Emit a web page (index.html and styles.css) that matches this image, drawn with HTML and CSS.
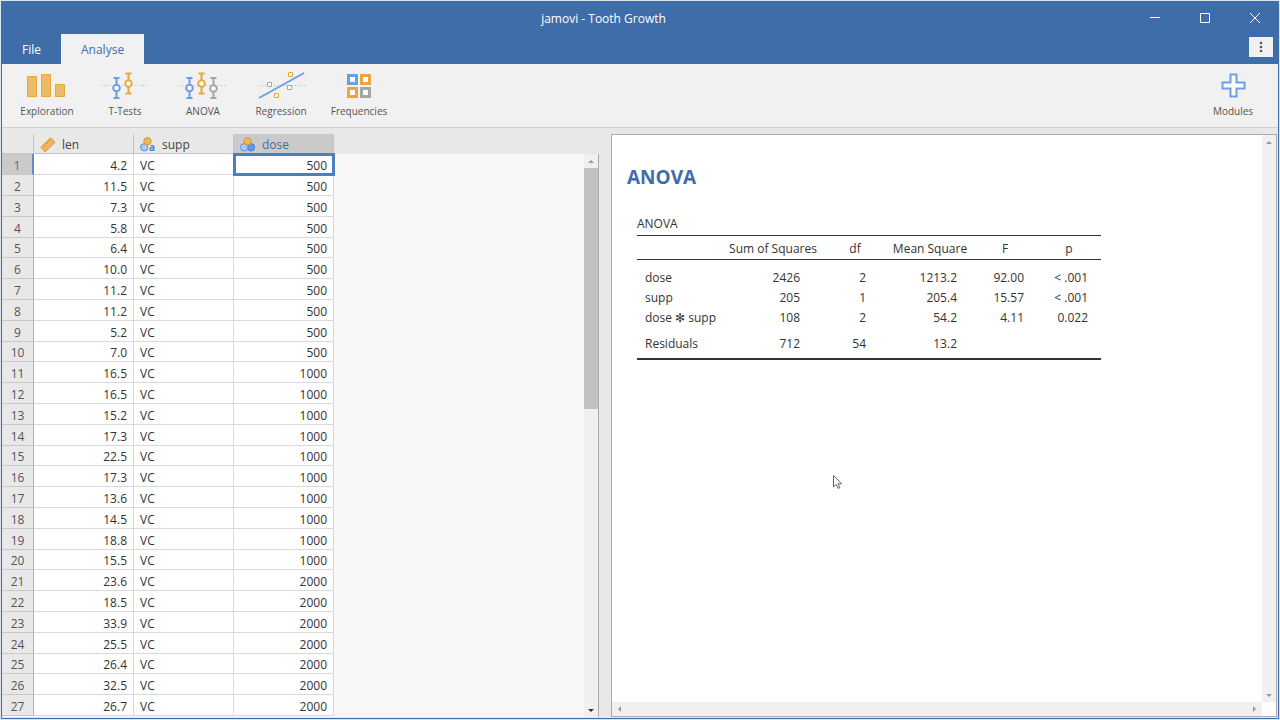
FILE: index.html
```html
<!DOCTYPE html>
<html lang="en">
<head>
    <meta charset="UTF-8">
    <meta name="viewport" content="width=device-width, initial-scale=1.0">
    <title>jamovi - Tooth Growth</title>
    <link rel="stylesheet" href="styles.css">
</head>
<body>
    <div class="window">
        <header class="title-bar">
            <h1 class="title">jamovi - Tooth Growth</h1>
            <button class="window-button" aria-label="Minimise">
                <svg width="12" height="12" viewBox="0 0 12 12"><path d="M1 5.5h10"/></svg>
            </button>
            <button class="window-button" aria-label="Maximise">
                <svg width="12" height="12" viewBox="0 0 12 12"><path d="M1.5 1.5h9v9h-9z"/></svg>
            </button>
            <button class="window-button" aria-label="Close">
                <svg width="12" height="12" viewBox="0 0 12 12"><path d="M1 1l10 10M11 1L1 11"/></svg>
            </button>
        </header>

        <nav class="tabs">
            <button class="tab">File</button>
            <button class="tab active">Analyse</button>
            <button class="menu-button" aria-label="Menu">
                <svg width="4" height="12" viewBox="0 0 4 12"><circle cx="2" cy="2" r="1.3"/><circle cx="2" cy="6" r="1.3"/><circle cx="2" cy="10" r="1.3"/></svg>
            </button>
        </nav>

        <div class="ribbon">
            <button class="ribbon-item">
                <svg width="48" height="30" viewBox="0 0 48 30">
                    <g fill="#ebbc65" stroke="#e6a93a">
                        <path d="M4.5 6.5h9v20h-9zM18.5 4.5h9v22h-9zM32.5 14.5h9v12h-9z"/>
                    </g>
                </svg>
                <span>Exploration</span>
            </button>
            <button class="ribbon-item">
                <svg width="48" height="30" viewBox="0 0 48 30">
                    <path class="dots" d="M0 15.5h46"/>
                    <g class="blue"><path d="M15.5 8v20M12.5 8h6M12.5 28h6"/><circle cx="15.5" cy="18" r="3.3"/></g>
                    <g class="gold"><path d="M27.5 3.5v20M24.5 3.5h6M24.5 23.5h6"/><circle cx="27.5" cy="13.5" r="3.3"/></g>
                </svg>
                <span>T-Tests</span>
            </button>
            <button class="ribbon-item">
                <svg width="48" height="30" viewBox="0 0 48 30">
                    <path class="dots" d="M0 15.5h46"/>
                    <g class="blue"><path d="M10.5 8v20M7.5 8h6M7.5 28h6"/><circle cx="10.5" cy="18" r="3.3"/></g>
                    <g class="gold"><path d="M22.5 3.5v20M19.5 3.5h6M19.5 23.5h6"/><circle cx="22.5" cy="13.5" r="3.3"/></g>
                    <g class="grey"><path d="M34.5 8v20M31.5 8h6M31.5 28h6"/><circle cx="34.5" cy="18.5" r="3.3"/></g>
                </svg>
                <span>ANOVA</span>
            </button>
            <button class="ribbon-item">
                <svg width="48" height="30" viewBox="0 0 48 30">
                    <path class="dots" d="M2 15.5h46"/>
                    <path class="blue" d="M2 28L47 3"/>
                    <g class="gold thin"><path d="M31.5 2.5h4v4h-4zM17.5 23.5h4v4h-4z"/></g>
                    <g class="grey thin"><path d="M10.5 12.5h4v4h-4zM30.5 15.5h4v4h-4z"/></g>
                </svg>
                <span>Regression</span>
            </button>
            <button class="ribbon-item">
                <svg width="48" height="30" viewBox="0 0 48 30">
                    <g class="thick">
                        <path class="blue" d="M13.5 5.5h8v8h-8z"/>
                        <path class="gold" d="M26.5 5.5h8v8h-8zM13.5 18.5h8v8h-8z"/>
                        <path class="grey" d="M26.5 18.5h8v8h-8z"/>
                    </g>
                </svg>
                <span>Frequencies</span>
            </button>
            <button class="ribbon-item modules">
                <svg width="48" height="30" viewBox="0 0 48 30">
                    <path class="blue" d="M21.5 4.5h6v8h8v6h-8v8h-6v-8h-8v-6h8z"/>
                </svg>
                <span>Modules</span>
            </button>
        </div>

        <main class="content">
            <section class="data">
                <table class="sheet">
                    <colgroup>
                        <col class="col-number">
                        <col class="col-data">
                        <col class="col-data">
                        <col class="col-data">
                    </colgroup>
                    <thead>
                        <tr>
                            <th></th>
                            <th>
                                <div class="variable">
                                    <svg width="16" height="16" viewBox="0 0 16 16">
                                        <path fill="#f1b55a" stroke="#d99a3a" d="M.8 10.3L10.6 .8l4.4 4.4-9.8 9.8z"/>
                                        <path stroke="#c98a2c" d="M3.5 8l1.6 1.6M6 5.5l1.6 1.6M8.5 3l1.6 1.6"/>
                                    </svg>
                                    len
                                </div>
                            </th>
                            <th>
                                <div class="variable">
                                    <svg width="16" height="16" viewBox="0 0 16 16">
                                        <circle cx="4.2" cy="10.3" r="3.7" fill="#a9caf3" stroke="#5b8ed6"/>
                                        <circle cx="7.5" cy="4.2" r="3.7" fill="#f1b55a" stroke="#d99a3a"/>
                                        <text x="9" y="14" class="letter">a</text>
                                    </svg>
                                    supp
                                </div>
                            </th>
                            <th class="selected">
                                <div class="variable">
                                    <svg width="16" height="16" viewBox="0 0 16 16">
                                        <circle cx="11" cy="10.3" r="3.7" fill="#5f98e8" stroke="#4a7fce"/>
                                        <circle cx="4.2" cy="10.3" r="3.7" fill="#a9caf3" stroke="#5b8ed6"/>
                                        <circle cx="7.5" cy="4.2" r="3.7" fill="#f1b55a" stroke="#d99a3a"/>
                                    </svg>
                                    dose
                                </div>
                            </th>
                        </tr>
                    </thead>
                    <tbody id="rows"></tbody>
                </table>
                <div class="scrollbar vertical">
                    <svg width="14" height="14" viewBox="0 0 14 14"><path fill="#999" d="M4 9l3-3 3 3z"/></svg>
                    <div class="track"><div class="thumb"></div></div>
                    <svg width="14" height="14" viewBox="0 0 14 14"><path fill="#333" d="M4 6l3 3 3-3z"/></svg>
                </div>
            </section>

            <section class="results">
                <div class="output">
                    <h2>ANOVA</h2>
                    <table class="anova">
                        <caption>ANOVA</caption>
                        <thead>
                            <tr>
                                <th class="term"></th>
                                <th class="ss">Sum of Squares</th>
                                <th class="df">df</th>
                                <th class="ms">Mean Square</th>
                                <th class="f">F</th>
                                <th class="p">p</th>
                            </tr>
                        </thead>
                        <tbody>
                            <tr>
                                <td class="term">dose</td>
                                <td class="ss">2426</td>
                                <td class="df">2</td>
                                <td class="ms">1213.2</td>
                                <td class="f">92.00</td>
                                <td class="p">&lt; .001</td>
                            </tr>
                            <tr>
                                <td class="term">supp</td>
                                <td class="ss">205</td>
                                <td class="df">1</td>
                                <td class="ms">205.4</td>
                                <td class="f">15.57</td>
                                <td class="p">&lt; .001</td>
                            </tr>
                            <tr>
                                <td class="term">dose ✻ supp</td>
                                <td class="ss">108</td>
                                <td class="df">2</td>
                                <td class="ms">54.2</td>
                                <td class="f">4.11</td>
                                <td class="p">0.022</td>
                            </tr>
                            <tr class="residuals">
                                <td class="term">Residuals</td>
                                <td class="ss">712</td>
                                <td class="df">54</td>
                                <td class="ms">13.2</td>
                                <td class="f"></td>
                                <td class="p"></td>
                            </tr>
                        </tbody>
                    </table>
                    <svg class="cursor" width="10" height="15" viewBox="0 0 10 15"><path d="M.5 .5v11.5l2.7-2.6 1.8 4 1.8-.8-1.8-3.8h3.6z"/></svg>
                </div>
                <div class="scrollbar vertical">
                    <svg width="14" height="14" viewBox="0 0 14 14"><path fill="#999" d="M4 9l3-3 3 3z"/></svg>
                    <div class="track"></div>
                    <svg width="14" height="14" viewBox="0 0 14 14"><path fill="#999" d="M4 6l3 3 3-3z"/></svg>
                </div>
                <div class="scrollbar horizontal">
                    <svg width="14" height="14" viewBox="0 0 14 14"><path fill="#999" d="M9 4L6 7l3 3z"/></svg>
                    <div class="track"></div>
                    <svg width="14" height="14" viewBox="0 0 14 14"><path fill="#999" d="M5 4l3 3-3 3z"/></svg>
                </div>
            </section>
        </main>
    </div>

    <script>
        // Tooth growth data: all rows here are VC, ten rows for each dose
        var len = ['4.2', '11.5', '7.3', '5.8', '6.4', '10.0', '11.2', '11.2', '5.2', '7.0',
                   '16.5', '16.5', '15.2', '17.3', '22.5', '17.3', '13.6', '14.5', '18.8', '15.5',
                   '23.6', '18.5', '33.9', '25.5', '26.4', '32.5', '26.7'];
        var doses = [500, 1000, 2000];

        var html = '';
        for (var i = 0; i < len.length; i++) {
            var selected = i == 0 ? ' class="selected"' : '';
            html += '<tr>' +
                '<th' + selected + '>' + (i + 1) + '</th>' +
                '<td class="number">' + len[i] + '</td>' +
                '<td>VC</td>' +
                '<td class="number' + (i == 0 ? ' active-cell' : '') + '">' + doses[Math.floor(i / 10)] + '</td>' +
                '</tr>';
        }
        document.getElementById('rows').innerHTML = html;
    </script>
</body>
</html>
```
FILE: styles.css
```css
* {
    margin: 0;
    padding: 0;
    box-sizing: border-box;
}

body {
    height: 100vh;
    padding: 1px;
    background-color: #dde6f0;
    font-family: "Open Sans", "Noto Sans", sans-serif;
    font-size: 12px;
    color: #333;
    overflow: hidden;
}

button {
    border: none;
    background: none;
    font-family: inherit;
    color: inherit;
}

svg {
    display: block;
    fill: none;
}

.window {
    height: 100%;
    display: flex;
    flex-direction: column;
    border: 1px solid #3e6da9;
    border-top: none;
    background-color: #e8e8e8;
}

/* title bar and tabs */

.title-bar {
    display: flex;
    gap: 4px;
    height: 33px;
    padding-left: 77px;
    background-color: #3e6da9;
    color: #fff;
}

.title {
    flex: 1;
    font-size: 12px;
    font-weight: normal;
    line-height: 35px;
    text-align: center;
}

.window-button {
    width: 46px;
    display: flex;
    align-items: center;
    justify-content: center;
}

.window-button svg {
    stroke: #fff;
}

.tabs {
    display: flex;
    height: 30px;
    background-color: #3e6da9;
}

.tab {
    padding: 0 20px;
    font-size: 12px;
    color: #fff;
}

.tab.active {
    background-color: #f1f1f1;
    color: #3e6da9;
}

.menu-button {
    width: 24px;
    height: 20px;
    margin: 3px 5px 0 auto;
    display: flex;
    align-items: center;
    justify-content: center;
    background-color: #f1f1f1;
}

.menu-button svg {
    fill: #555;
}

/* ribbon */

.ribbon {
    display: flex;
    height: 64px;
    padding: 6px 6px 0;
    border-bottom: 1px solid #d0d0d0;
    background-color: #f1f1f1;
}

.ribbon-item {
    width: 78px;
    display: flex;
    flex-direction: column;
    align-items: center;
    gap: 4px;
    font-size: 10px;
    line-height: 14px;
    color: #555;
}

.modules {
    margin-left: auto;
}

.blue, .gold, .grey {
    fill: #fff;
    stroke-width: 2;
}

.blue {
    stroke: #6a9fe8;
}

.gold {
    stroke: #e6a93a;
}

.grey {
    stroke: #a6a6a6;
}

.dots {
    stroke: #a9bcd6;
    stroke-dasharray: 1 2;
}

.thin {
    stroke-width: 1;
}

.thick path {
    stroke-width: 3;
}

/* data and results side by side */

.content {
    flex: 1;
    min-height: 0;
    display: grid;
    grid-template-columns: 597fr 666fr;
    grid-template-rows: 100%;
    gap: 12px;
    padding: 6px 1px 1px 0;
}

.data {
    display: flex;
    justify-content: space-between;
    overflow: hidden;
    background: linear-gradient(#e8e8e8 20px, #f8f8f9 20px);
}

.sheet {
    width: 332px;
    height: 0;
    table-layout: fixed;
    border-collapse: separate;
    border-spacing: 0;
}

.col-number {
    width: 32px;
}

.col-data {
    width: 100px;
}

.sheet tr {
    height: 21px;
}

.sheet thead tr, .sheet tbody tr:nth-child(5n) {
    height: 20px;
}

.sheet th, .sheet td {
    padding-top: 3px;
    border-right: 1px solid #d9d9dd;
    border-bottom: 1px solid #d9d9dd;
    line-height: 16px;
}

.sheet th {
    background-color: #e8e8e8;
    font-weight: normal;
    color: #555;
}

.sheet thead th {
    padding-top: 2px;
    border-color: #c4c4c4;
    text-align: left;
    color: #444;
}

.sheet tbody th {
    border-right-color: #b4b4b4;
    border-bottom-color: #c8c8c8;
}

.sheet td {
    padding-left: 6px;
    padding-right: 6px;
    background-color: #fff;
}

.sheet .number {
    text-align: right;
}

.sheet .selected {
    background-color: #cacaca;
    color: #3e6da9;
}

.sheet tbody .selected {
    border-right: 2px solid #5b8ed0;
}

.sheet .active-cell {
    outline: 3px solid #4b7fc2;
    outline-offset: -2px;
}

.variable {
    display: flex;
    align-items: center;
    gap: 6px;
    padding-left: 6px;
}

.letter {
    fill: #4a7fce;
    font-size: 10px;
    font-weight: bold;
}

/* scrollbars */

.scrollbar {
    display: flex;
    background-color: #f0f0f0;
}

.vertical {
    width: 14px;
    flex-direction: column;
}

.data .scrollbar {
    width: 15px;
    margin-top: 20px;
    border-right: 1px solid #ababab;
}

.track {
    flex: 1;
}

.thumb {
    height: 45%;
    background-color: #c1c1c1;
}

/* results */

.results {
    display: grid;
    grid-template-columns: 1fr 14px;
    grid-template-rows: 1fr 14px;
    border: 1px solid #ababab;
    background-color: #fff;
}

.output {
    position: relative;
    padding: 27px 15px;
}

.output h2 {
    font-size: 19px;
    line-height: 30px;
    color: #3e6da9;
}

.anova {
    width: 464px;
    margin: 23px 0 0 10px;
    table-layout: fixed;
    border-collapse: collapse;
    border-top: 1px solid #333;
    border-bottom: 2px solid #333;
}

.anova caption {
    padding-bottom: 2px;
    line-height: 18px;
    text-align: left;
}

.anova th {
    height: 24px;
    padding-top: 1px;
    border-bottom: 1px solid #333;
    font-weight: normal;
}

.anova td {
    height: 20px;
    line-height: 20px;
    text-align: right;
}

.anova tbody tr:first-child td {
    padding-top: 8px;
}

.anova .residuals td {
    padding-top: 6px;
    padding-bottom: 4px;
}

.anova .term {
    width: 86px;
    padding-left: 8px;
    text-align: left;
    white-space: nowrap;
}

.anova .ss {
    width: 100px;
}

.anova .ms {
    width: 86px;
}

.anova .df, .anova .f, .anova .p {
    width: 64px;
}

.anova tbody .ss {
    padding-right: 23px;
}

.anova tbody .df {
    padding-right: 21px;
}

.anova tbody .ms {
    padding-right: 16px;
}

.anova tbody .f, .anova tbody .p {
    padding-right: 13px;
}

/* mouse pointer lying over the output */
.cursor {
    position: absolute;
    left: 34%;
    top: 60%;
    fill: #fff;
    stroke: #666;
}
```
